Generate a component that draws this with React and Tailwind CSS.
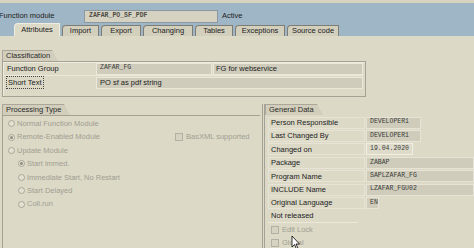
import React from "react";

const tabs = [
  { label: "Attributes", w: "w-[46px]", active: true },
  { label: "Import", w: "w-[37px]" },
  { label: "Export", w: "w-[40px]" },
  { label: "Changing", w: "w-[50px]" },
  { label: "Tables", w: "w-[38px]" },
  { label: "Exceptions", w: "w-[50px]" },
  { label: "Source code", w: "w-[52px]" },
];

const Radio = ({ checked }) => (
  <span className="w-[7px] h-[7px] rounded-full border border-[#a9a699] bg-[#e4e1d3] flex items-center justify-center shrink-0">
    {checked && <span className="w-[3px] h-[3px] rounded-full bg-[#8f8c80]" />}
  </span>
);

const Check = () => (
  <span className="w-[8px] h-[8px] border border-[#b3b0a3] bg-[#d6d3c3] shrink-0" />
);

const GroupTitle = ({ children, w }) => (
  <div className={`h-[11px] ${w} bg-[#d2cebb] border-t border-l border-[#aaa79a] flex items-center pl-[3px] text-[#2a2a2a] [clip-path:polygon(0_0,calc(100%-6px)_0,100%_100%,0_100%)]`}>
    {children}
  </div>
);

const generalRows = [
  { label: "Person Responsible", value: "DEVELOPER1", w: "w-[55px]" },
  { label: "Last Changed By", value: "DEVELOPER1", w: "w-[55px]" },
  { label: "Changed on", value: "19.04.2020", w: "w-[47px]", light: true },
  { label: "Package", value: "ZABAP", w: "flex-1" },
  { label: "Program Name", value: "SAPLZAFAR_FG", w: "flex-1" },
  { label: "INCLUDE Name", value: "LZAFAR_FGU02", w: "flex-1" },
  { label: "Original Language", value: "EN", w: "w-[13px]" },
];

const procItems = [
  { label: "Normal Function Module", indent: false },
  { label: "Remote-Enabled Module", indent: false, checked: true },
  { label: "Update Module", indent: false },
  { label: "Start immed.", indent: true, checked: true },
  { label: "Immediate Start, No Restart", indent: true },
  { label: "Start Delayed", indent: true },
  { label: "Coll.run", indent: true },
];

export default function App() {
  return (
    <div className="w-[474px] h-[248px] overflow-hidden bg-[#dcd9c7] text-[7.5px] leading-none text-[#222] font-['Liberation_Sans',Arial,sans-serif] relative">
      {/* header */}
      <div className="h-[3px] bg-[#d8d3bd]" />
      <div className="h-[33px] bg-[#9fb6c6] flex flex-col">
        <div className="flex items-center mt-[6px] h-[14px]">
          <span className="w-[85px] -ml-[1px]">Function module</span>
          <div className="w-[134px] h-[13px] bg-[#d6d2c2] border border-[#8d99a2] flex items-center pl-[4px] font-['Liberation_Mono',monospace] text-[6.5px] font-bold text-[#4a4a44]">
            ZAFAR_PO_SF_PDF
          </div>
          <span className="ml-[4px]">Active</span>
        </div>
        <div className="flex items-end h-[13px] mt-auto pl-[14px] gap-[2px]">
          {tabs.map((t) => (
            <div
              key={t.label}
              className={`${t.w} flex items-center justify-center border-t border-l border-r rounded-tl-[4px] ${
                t.active
                  ? "h-[13px] bg-[#dcd9c7] border-[#efece0]"
                  : "h-[11px] bg-[#d3cfbd] border-[#7f7d73] border-b-0"
              }`}
            >
              {t.label}
            </div>
          ))}
        </div>
      </div>

      {/* classification */}
      <div className="ml-[2px] mt-[14px] w-[364px]">
        <GroupTitle w="w-[56px]">Classification</GroupTitle>
        <div className="border border-[#a5a295] shadow-[inset_1px_1px_0_#eeebdf] px-[2px] pt-[0px] pb-[7px]">
          <div className="flex items-center h-[14px] border-b border-[#ebe8da]">
            <span className="w-[91px] pl-[2px]">Function Group</span>
            <div className="w-[116px] h-[12px] bg-[#cfccbc] border border-[#ebe8da] flex items-center pl-[3px] font-['Liberation_Mono',monospace] text-[6.5px] text-[#3c3c38]">
              ZAFAR_FG
            </div>
            <div className="flex-1 h-[12px] bg-[#cfccbc] border border-[#ebe8da] ml-[1px] flex items-center pl-[2px]">
              FG for webservice
            </div>
          </div>
          <div className="flex items-center h-[13px]">
            <span className="w-[91px] pl-[1px]">
              <span className="border border-dotted border-[#444] px-[1px] py-[1px]">Short Text</span>
            </span>
            <div className="flex-1 h-[12px] bg-[#cfccbc] border border-[#ebe8da] flex items-center pl-[3px]">
              PO sf as pdf string
            </div>
          </div>
        </div>
      </div>

      {/* lower area */}
      <div className="flex mt-[7px] h-[150px]">
        {/* processing type */}
        <div className="ml-[2px] w-[258px] flex flex-col">
          <GroupTitle w="w-[68px]">Processing Type</GroupTitle>
          <div className="flex-1 border-l border-t border-[#a5a295] flex">
            <div className="flex flex-col pt-[1px] w-[160px] text-[#a19e91]">
              {procItems.map((p) => (
                <div
                  key={p.label}
                  className={`h-[13.4px] flex items-center gap-[2px] ${p.indent ? "pl-[15px]" : "pl-[5px]"}`}
                >
                  <Radio checked={p.checked} />
                  <span>{p.label}</span>
                </div>
              ))}
            </div>
            <div className="pt-[14.4px] text-[#a19e91]">
              <div className="flex items-center gap-[3px] h-[13.4px] pl-[12px]">
                <Check />
                <span>BasXML supported</span>
              </div>
            </div>
          </div>
        </div>

        {/* general data */}
        <div className="ml-[2px] flex-1 flex flex-col border-l-[3px] border-double border-[#a5a295]">
          <GroupTitle w="w-[58px]">General Data</GroupTitle>
          <div className="flex-1 flex flex-col pt-[1px] pl-[3px]">
            {generalRows.map((r) => (
              <div key={r.label} className="flex items-center h-[13.4px]">
                <span className="w-[97px] h-[12px] flex items-center pl-[2px] border border-[#e7e4d6]">
                  {r.label}
                </span>
                <div
                  className={`${r.w} h-[12px] ml-[1px] flex items-center pl-[3px] font-['Liberation_Mono',monospace] text-[6.5px] text-[#3c3c38] border ${
                    r.light ? "bg-[#dedbcb] border-[#f1eee2]" : "bg-[#cfccbc] border-[#e7e4d6]"
                  }`}
                >
                  {r.value}
                </div>
              </div>
            ))}
            <div className="h-[13.4px] flex items-center pl-[3px] w-[90px] border-b border-[#ebe8da]">Not released</div>
            <div className="h-[13px] flex items-center gap-[3px] pl-[3px] text-[#a19e91]">
              <Check />
              <span>Edit Lock</span>
            </div>
            <div className="h-[13px] flex items-center gap-[3px] pl-[3px] text-[#a19e91]">
              <Check />
              <span>Global</span>
            </div>
          </div>
        </div>
      </div>

      {/* mouse cursor */}
      <svg className="absolute left-[291px] top-[235px]" width="10" height="15" viewBox="0 0 10 15">
        <path d="M1 1 L1 12 L3.5 9.5 L5.5 14 L7 13.3 L5 9 L8.5 9 Z" fill="#fff" stroke="#000" strokeWidth="0.8" />
      </svg>
    </div>
  );
}
